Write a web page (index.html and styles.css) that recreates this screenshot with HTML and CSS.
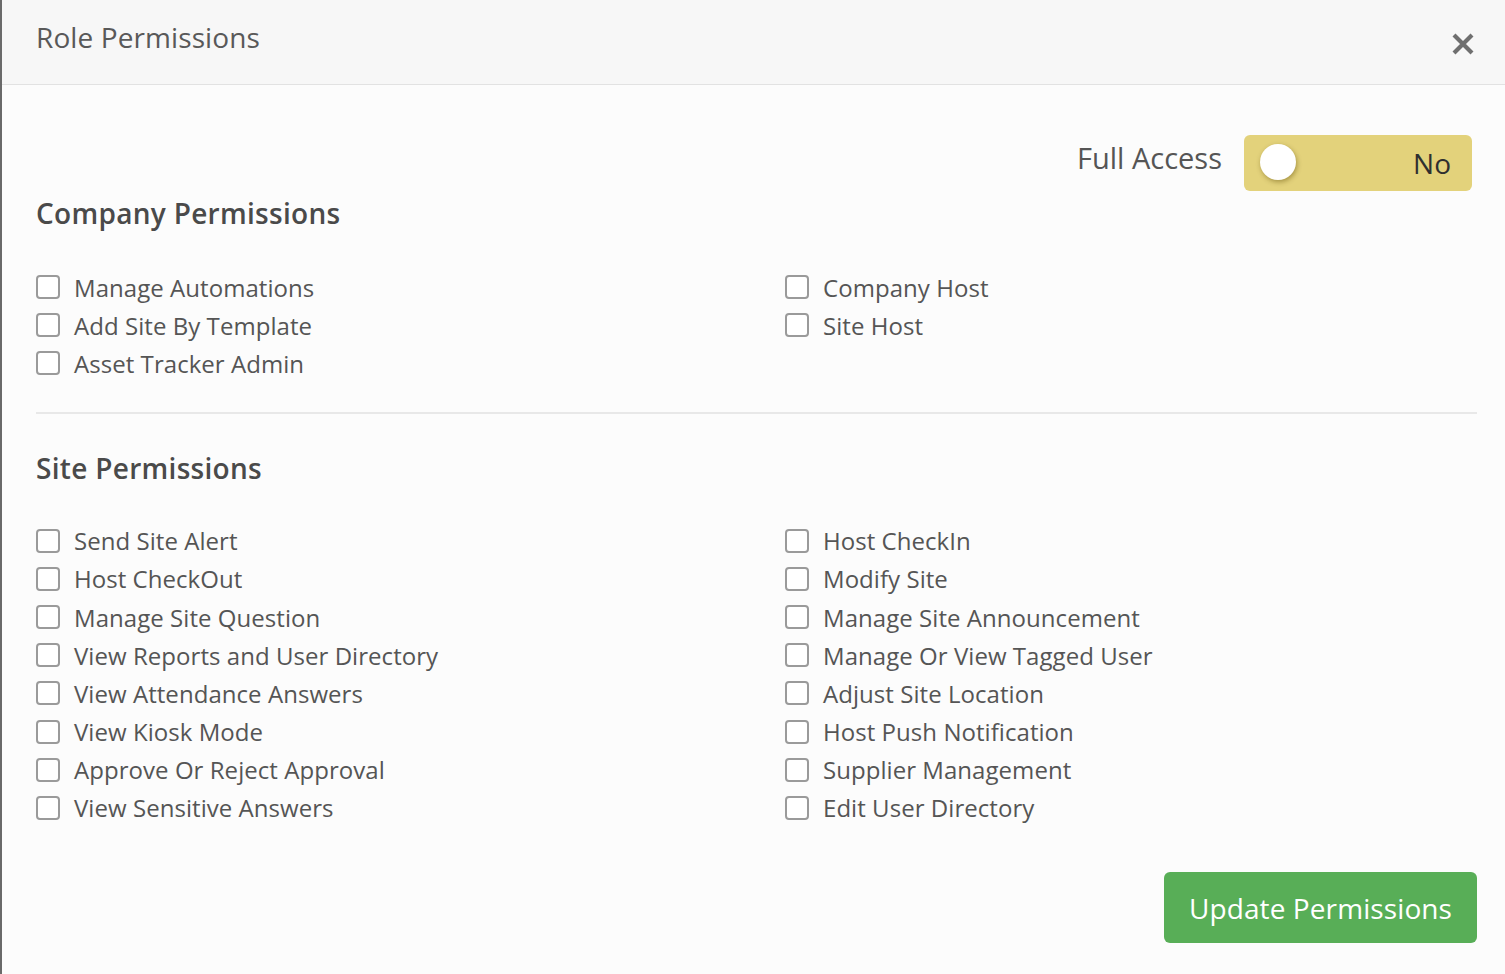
FILE: index.html
```html
<!DOCTYPE html>
<html lang="en">
<head>
    <meta charset="UTF-8">
    <title>Role Permissions</title>
    <link rel="stylesheet" href="styles.css">
</head>
<body>
    <div class="modal">
        <div class="modal-header">
            <h4 class="modal-title">Role Permissions</h4>
            <button class="close-btn" aria-label="Close">
                <svg width="24" height="24" viewBox="0 0 24 24">
                    <path d="M3 3 L21 21 M21 3 L3 21" stroke="#6f6f6f" stroke-width="4.2" stroke-linecap="butt"/>
                </svg>
            </button>
        </div>

        <div class="modal-body">
            <div class="full-access">
                <span class="full-access-label">Full Access</span>
                <div class="toggle">
                    <span class="toggle-knob"></span>
                    <span class="toggle-text">No</span>
                </div>
            </div>

            <h3 class="section-title">Company Permissions</h3>
            <div class="perm-grid">
                <div class="perm-col">
                    <label class="perm"><span class="box"></span>Manage Automations</label>
                    <label class="perm"><span class="box"></span>Add Site By Template</label>
                    <label class="perm"><span class="box"></span>Asset Tracker Admin</label>
                </div>
                <div class="perm-col">
                    <label class="perm"><span class="box"></span>Company Host</label>
                    <label class="perm"><span class="box"></span>Site Host</label>
                </div>
            </div>

            <hr class="divider">

            <h3 class="section-title site">Site Permissions</h3>
            <div class="perm-grid site-grid">
                <div class="perm-col">
                    <label class="perm"><span class="box"></span>Send Site Alert</label>
                    <label class="perm"><span class="box"></span>Host CheckOut</label>
                    <label class="perm"><span class="box"></span>Manage Site Question</label>
                    <label class="perm"><span class="box"></span>View Reports and User Directory</label>
                    <label class="perm"><span class="box"></span>View Attendance Answers</label>
                    <label class="perm"><span class="box"></span>View Kiosk Mode</label>
                    <label class="perm"><span class="box"></span>Approve Or Reject Approval</label>
                    <label class="perm"><span class="box"></span>View Sensitive Answers</label>
                </div>
                <div class="perm-col">
                    <label class="perm"><span class="box"></span>Host CheckIn</label>
                    <label class="perm"><span class="box"></span>Modify Site</label>
                    <label class="perm"><span class="box"></span>Manage Site Announcement</label>
                    <label class="perm"><span class="box"></span>Manage Or View Tagged User</label>
                    <label class="perm"><span class="box"></span>Adjust Site Location</label>
                    <label class="perm"><span class="box"></span>Host Push Notification</label>
                    <label class="perm"><span class="box"></span>Supplier Management</label>
                    <label class="perm"><span class="box"></span>Edit User Directory</label>
                </div>
            </div>

            <div class="footer">
                <button class="update-btn">Update Permissions</button>
            </div>
        </div>
    </div>
</body>
</html>
```

FILE: styles.css
```css
* {
    margin: 0;
    padding: 0;
    box-sizing: border-box;
}

body {
    background-color: #fcfcfc;
    font-family: 'Open Sans', 'Noto Sans', sans-serif;
    color: #555;
}

.modal {
    height: 974px;
    border-left: 2px solid #6a6a6a;
    background-color: #fcfcfc;
}

.modal-header {
    height: 85px;
    display: flex;
    justify-content: space-between;
    align-items: center;
    padding: 0 30px 10px 34px;
    background-color: #f7f7f7;
    border-bottom: 1px solid #e2e2e2;
}

.modal-title {
    font-size: 28px;
    font-weight: 400;
    color: #595959;
    letter-spacing: 0.1px;
}

.close-btn {
    border: none;
    background: none;
    margin-top: 14px;
    cursor: pointer;
    display: flex;
}

.modal-body {
    padding: 0 28px 0 34px;
}

.full-access {
    display: flex;
    justify-content: flex-end;
    align-items: center;
    margin-top: 50px;
    padding-right: 5px;
}

.full-access-label {
    font-size: 29px;
    color: #555;
    margin-right: 22px;
    margin-top: -11px;
}

.toggle {
    position: relative;
    width: 228px;
    height: 56px;
    background-color: #e3d27b;
    border-radius: 6px;
    display: flex;
    align-items: center;
    justify-content: flex-end;
    padding-right: 21px;
}

.toggle-knob {
    position: absolute;
    left: 16px;
    top: 9px;
    width: 36px;
    height: 36px;
    border-radius: 50%;
    background-color: #fff;
    box-shadow: 1px 2px 5px rgba(90, 70, 0, 0.45);
}

.toggle-text {
    font-size: 28px;
    color: #2f2f2f;
}

.section-title {
    font-size: 28px;
    font-weight: 600;
    color: #4a4a4a;
    line-height: 34px;
    margin-top: 5px;
    letter-spacing: 0.3px;
}

.section-title.site {
    margin-top: 37px;
}

.perm-grid {
    display: grid;
    grid-template-columns: 749px 1fr;
    margin-top: 38px;
}

.site-grid {
    margin-top: 37px;
}

.perm {
    display: flex;
    align-items: center;
    height: 38.2px;
    font-size: 24px;
    color: #555;
    letter-spacing: 0.05px;
}

.box {
    width: 24px;
    height: 24px;
    border: 2px solid #9a9a9a;
    border-radius: 4px;
    background-color: #fff;
    margin-right: 14px;
    flex-shrink: 0;
}

.divider {
    border: none;
    border-top: 2px solid #e8e8e8;
    margin-top: 29px;
}

.footer {
    display: flex;
    justify-content: flex-end;
    margin-top: 45px;
}

.update-btn {
    width: 313px;
    height: 71px;
    border: none;
    border-radius: 6px;
    background-color: #58ae57;
    color: #fff;
    font-family: 'Open Sans', 'Noto Sans', sans-serif;
    font-size: 28px;
    letter-spacing: 0.1px;
    cursor: pointer;
}
```
